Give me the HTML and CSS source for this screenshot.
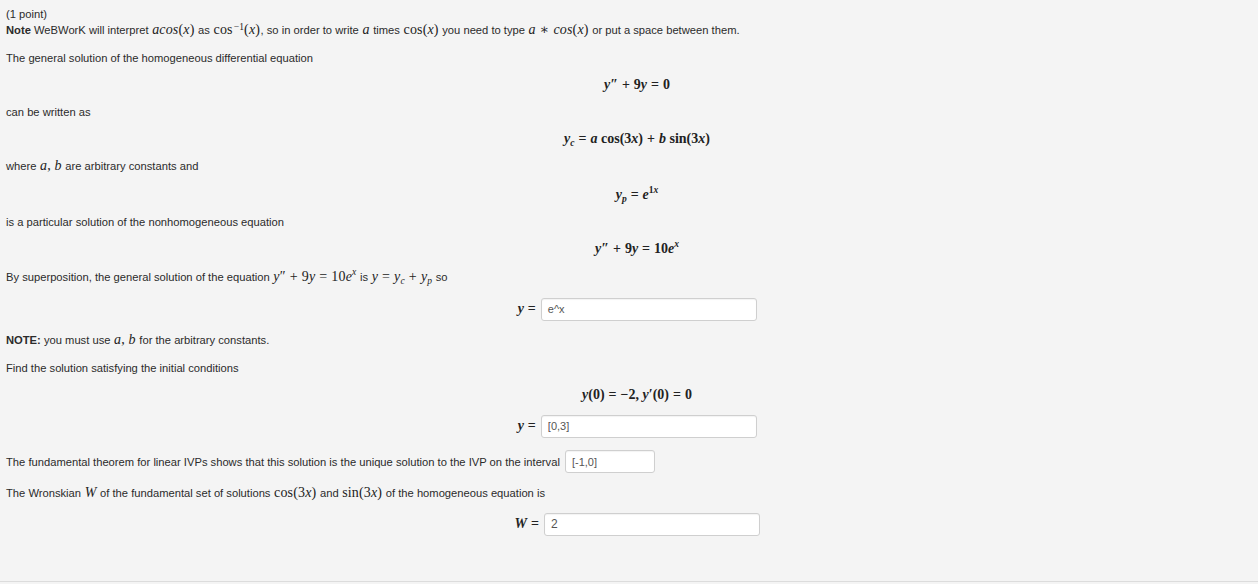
FILE: index.html
```html
<!DOCTYPE html>
<html>
<head>
<meta charset="utf-8">
<link rel="stylesheet" href="styles.css">
</head>
<body>
<div class="page">
  <div class="txt">(1 point)</div>
  <div class="txt"><b>Note</b> WeBWorK will interpret <span class="m"><i>acos</i>(<i>x</i>)</span> as <span class="m">cos<sup class="hi">−1</sup>(<i>x</i>)</span>, so in order to write <span class="m"><i>a</i></span> times <span class="m">cos(<i>x</i>)</span> you need to type <span class="m"><i>a</i><span class="op">∗</span><i>cos</i>(<i>x</i>)</span> or put a space between them.</div>
  <div class="txt gap">The general solution of the homogeneous differential equation</div>
  <div class="disp"><span class="m"><i>y</i>″<span class="op">+</span>9<i>y</i><span class="op">=</span>0</span></div>
  <div class="txt">can be written as</div>
  <div class="disp"><span class="m"><i>y</i><sub><i>c</i></sub><span class="op">=</span><i>a</i> cos(3<i>x</i>)<span class="op">+</span><i>b</i> sin(3<i>x</i>)</span></div>
  <div class="txt">where <span class="m"><i>a</i>, <i>b</i></span> are arbitrary constants and</div>
  <div class="disp dispsup"><span class="m"><i>y</i><sub><i>p</i></sub><span class="op">=</span><i>e</i><sup>1<i>x</i></sup></span></div>
  <div class="txt">is a particular solution of the nonhomogeneous equation</div>
  <div class="disp"><span class="m"><i>y</i>″<span class="op">+</span>9<i>y</i><span class="op">=</span>10<i>e</i><sup><i>x</i></sup></span></div>
  <div class="txt gap2">By superposition, the general solution of the equation <span class="m"><i>y</i>″<span class="op">+</span>9<i>y</i><span class="op">=</span>10<i>e</i><sup><i>x</i></sup></span> is <span class="m"><i>y</i><span class="op">=</span><i>y</i><sub><i>c</i></sub><span class="op">+</span><i>y</i><sub><i>p</i></sub></span> so</div>
  <div class="answer a1"><span class="m lbl"><i>y</i><span class="op">=</span></span><span class="field">e^x</span></div>
  <div class="txt gap"><b>NOTE:</b> you must use <span class="m"><i>a</i>, <i>b</i></span> for the arbitrary constants.</div>
  <div class="txt gap">Find the solution satisfying the initial conditions</div>
  <div class="disp"><span class="m"><i>y</i>(0)<span class="op">=</span>−2, <i>y</i>′(0)<span class="op">=</span>0</span></div>
  <div class="answer a2"><span class="m lbl"><i>y</i><span class="op">=</span></span><span class="field">[0,3]</span></div>
  <div class="txt row">The fundamental theorem for linear IVPs shows that this solution is the unique solution to the IVP on the interval <span class="field small">[-1,0]</span></div>
  <div class="txt gap">The Wronskian <span class="m"><i>W</i></span> of the fundamental set of solutions <span class="m">cos(3<i>x</i>)</span> and <span class="m">sin(3<i>x</i>)</span> of the homogeneous equation is</div>
  <div class="answer a3"><span class="m lbl"><i>W</i><span class="op">=</span></span><span class="field">2</span></div>
</div>
</body>
</html>
```

FILE: styles.css
```css
html, body {
  margin: 0;
  padding: 0;
  background: #f4f4f4;
}
.page {
  box-sizing: border-box;
  width: 1258px;
  height: 582px;
  padding: 6px 0 0 6px;
  border-bottom: 1px solid #dcdcdc;
  font-family: "Liberation Sans", Arial, sans-serif;
  font-size: 11.2px;
  color: #2b2b2b;
}
.txt {
  line-height: 16px;
  height: 16px;
  white-space: nowrap;
}
.gap { margin-top: 12px; }
.gap2 { margin-top: 10px; }
.m {
  font-family: "Liberation Serif", "DejaVu Serif", serif;
  font-size: 14px;
  letter-spacing: 0.15px;
  color: #222;
  margin: 0 0.5px;
}
.m i { font-style: italic; }
.m sup {
  font-size: 9.5px;
  vertical-align: 6px;
  line-height: 0;
}
.m sup.hi { vertical-align: 4px; margin-left: 1px; }
.m sub {
  font-size: 9.5px;
  vertical-align: -3px;
  line-height: 0;
}
.op { margin: 0 4px; }
.disp {
  margin: 9px 0;
  padding-left: 10px;
  text-align: center;
  line-height: 20px;
  height: 20px;
}
.dispsup { margin-top: 11px; }
.disp .m { font-size: 14px; font-weight: bold; letter-spacing: 0; }
.answer {
  display: flex;
  align-items: center;
  justify-content: center;
  height: 22px;
}
.a1 { margin-top: 13px; padding-left: 10px; }
.a2 { margin-top: 10px; padding-left: 10px; }
.a3 { margin-top: 12px; padding-left: 10px; }
.lbl {
  font-size: 14px;
  font-weight: bold;
  margin-right: 3px;
  letter-spacing: 0;
}
.lbl .op { margin-right: 2px; }
.field {
  box-sizing: border-box;
  display: inline-flex;
  align-items: center;
  width: 216px;
  height: 23px;
  padding-left: 6px;
  background: #fff;
  border: 1px solid #cfcfcf;
  border-radius: 3px;
  box-shadow: inset 0 1px 1px rgba(0,0,0,0.05);
  font-family: "Liberation Sans", Arial, sans-serif;
  font-size: 11px;
  color: #555;
}
.a3 .field { font-size: 12px; }
.row {
  margin-top: 13px;
  height: 23px;
  display: flex;
  align-items: center;
}
.field.small {
  width: 90px;
  margin-left: 5px;
}
```
